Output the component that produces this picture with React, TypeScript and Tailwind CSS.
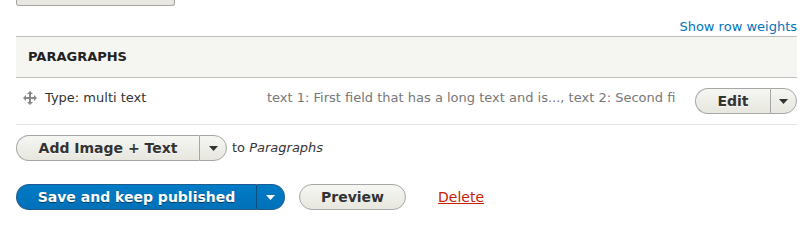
import type { ReactNode } from "react";

const font = { fontFamily: '"DejaVu Sans", "Liberation Sans", sans-serif' };

function Caret({ light }: { light?: boolean }) {
  return (
    <svg width="9" height="5" viewBox="0 0 9 5" className="block">
      <path d="M0 0h9L4.5 5z" fill={light ? "#ffffff" : "#333333"} />
    </svg>
  );
}

function SplitButton({
  label,
  primary,
  mainW,
  dropW,
}: {
  label: ReactNode;
  primary?: boolean;
  mainW: number;
  dropW: number;
}) {
  const base = primary
    ? "bg-gradient-to-b from-[#007bc6] to-[#0071b8] border-[#1e5c90] text-white [text-shadow:0_1px_rgba(0,0,0,0.5)]"
    : "bg-gradient-to-b from-[#f6f6f3] to-[#e7e7df] border-[#a6a6a6] text-[#333] [text-shadow:0_1px_rgba(255,255,255,0.6)]";
  return (
    <div className="flex h-[26px]">
      <div
        className={`flex items-center justify-center rounded-l-full border border-r-0 text-[14px] font-bold ${base}`}
        style={{ width: mainW }}
      >
        {label}
      </div>
      <div
        className={`flex items-center justify-center rounded-r-full border ${base} ${
          primary ? "border-l-[#0a4f80]" : "border-l-[#a6a6a6]"
        }`}
        style={{ width: dropW }}
      >
        <Caret light={primary} />
      </div>
    </div>
  );
}

function DragIcon() {
  return (
    <svg width="14" height="14" viewBox="0 0 14 14" className="block">
      <path
        fill="#888"
        d="M7 0l3 3H8v3h3V4l3 3-3 3V8H8v3h2l-3 3-3-3h2V8H3v2L0 7l3-3v2h3V3H4z"
      />
    </svg>
  );
}

export default function App() {
  return (
    <div className="w-[807px] h-[227px] overflow-hidden bg-white text-[#333]" style={font}>
      <div className="ml-[16px] w-[159px] h-[6px] border border-t-0 border-[#a6a6a6] rounded-b-[3px] bg-[#e8e7e0]" />

      <div className="flex justify-end pr-[10px] mt-[11px] h-[19px]">
        <span className="text-[13px] leading-[19px] text-[#0074bd]">Show row weights</span>
      </div>

      <div className="ml-[16px] mr-[10px]">
        <div className="h-[42px] border-t border-b border-[#bfbfba] bg-[#f5f5f2] flex items-center px-[12px]">
          <span className="text-[13px] font-bold uppercase text-[#222]">Paragraphs</span>
        </div>
        <div className="h-[47px] border-b border-[#e6e4df] flex items-center">
          <div className="flex items-center pl-[7px] w-[251px] -mt-[6px]">
            <DragIcon />
            <span className="ml-[8px] text-[13px] text-[#333]">Type: multi text</span>
          </div>
          <div className="-mt-[6px] whitespace-nowrap text-[13px] text-[#777]">
            text 1: First field that has a long text and is..., text 2: Second fi
          </div>
          <div className="ml-auto">
            <SplitButton label="Edit" mainW={75} dropW={27} />
          </div>
        </div>
      </div>

      <div className="flex items-center ml-[16px] mt-[10px]">
        <SplitButton label="Add Image + Text" mainW={183} dropW={28} />
        <span className="ml-[5px] text-[13px] text-[#333]">
          to <em>Paragraphs</em>
        </span>
      </div>

      <div className="flex items-center ml-[16px] mt-[23px]">
        <SplitButton label="Save and keep published" primary mainW={240} dropW={29} />
        <div className="ml-[14px] w-[107px] h-[26px] flex items-center justify-center rounded-full border border-[#a6a6a6] bg-gradient-to-b from-[#f6f6f3] to-[#e7e7df] text-[14px] font-bold text-[#333]">
          Preview
        </div>
        <span className="ml-[32px] text-[14px] text-[#c72100] underline">Delete</span>
      </div>
    </div>
  );
}
